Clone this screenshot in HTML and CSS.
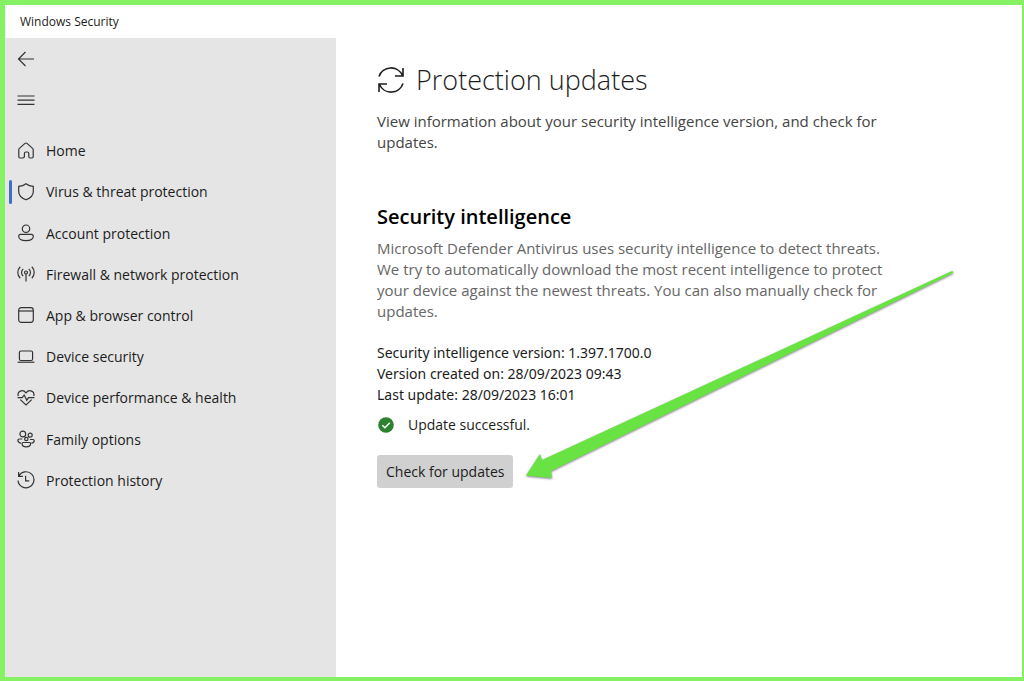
FILE: index.html
```html
<!DOCTYPE html>
<html lang="en">
<head>
<meta charset="UTF-8">
<meta name="viewport" content="width=device-width, initial-scale=1.0">
<title>Windows Security</title>
<link rel="stylesheet" href="styles.css">
</head>
<body>
<div class="window">
  <header class="titlebar">Windows Security</header>

  <div class="layout">
    <aside class="sidebar">
      <button class="icon-button" aria-label="Back">
        <svg class="icon" viewBox="0 0 18 18"><path d="M17 9H1.500M8.500 2L1.500 9l7 7"/></svg>
      </button>
      <button class="icon-button" aria-label="Menu">
        <svg class="icon" viewBox="0 0 18 18"><path d="M.5 5h17M.5 9.200h17M.5 13.400h17"/></svg>
      </button>

      <nav class="nav">
        <a class="nav-link" href="#">
          <svg class="icon" viewBox="0 0 18 18"><path d="M1.800 7.600Q1.800 6.900 2.400 6.400L8 1.400q1-.8 2 0l5.600 5q.6.5.6 1.200v7.200q0 1.200-1.200 1.200h-2q-1.200 0-1.200-1.200v-3.300q0-1.500-1.500-1.500h-1.400q-1.500 0-1.500 1.500v3.300Q6.600 16 5.400 16H3q-1.200 0-1.200-1.200z"/></svg>
          Home
        </a>
        <a class="nav-link active" href="#">
          <svg class="icon" viewBox="0 0 18 18"><path d="M9 .8Q12 3.200 16.300 3.400v5q0 5.500-7.300 8.400Q1.700 13.900 1.700 8.400v-5Q6 3.200 9 .8z"/></svg>
          Virus &amp; threat protection
        </a>
        <a class="nav-link" href="#">
          <svg class="icon" viewBox="0 0 18 18"><circle cx="9" cy="4.700" r="3.700"/><path d="M3.700 10.300h10.600q2 0 2 2 0 4.400-7.300 4.400t-7.300-4.400q0-2 2-2z"/></svg>
          Account protection
        </a>
        <a class="nav-link" href="#">
          <svg class="icon" viewBox="0 0 18 18"><circle cx="9" cy="7.500" r="1.500"/><path d="M9 9v7.500M6.200 11a4.500 4.500 0 0 1 0-7M11.800 11a4.500 4.500 0 0 0 0-7M3.200 13.200a8 8 0 0 1 0-11.400M14.800 13.200a8 8 0 0 0 0-11.400"/></svg>
          Firewall &amp; network protection
        </a>
        <a class="nav-link" href="#">
          <svg class="icon" viewBox="0 0 18 18"><rect x="1.700" y="1.700" width="14.600" height="14.600" rx="2.500"/><path d="M1.700 5h14.600"/></svg>
          App &amp; browser control
        </a>
        <a class="nav-link" href="#">
          <svg class="icon" viewBox="0 0 18 18"><rect x="2.400" y="3" width="13.200" height="9.500" rx="1.500"/><path d="M.6 14.200h16.800"/></svg>
          Device security
        </a>
        <a class="nav-link" href="#">
          <svg class="icon" viewBox="0 0 18 18"><path d="M1.300 7C-.2 2.500 5.500-.5 9 3.800 12.500-.5 18.200 2.500 16.700 7M3.300 10.600L9 16l5.700-5.400M.6 8.600h4.600l2-2.600 2.600 5.200 1.700-2.600h5.900"/></svg>
          Device performance &amp; health
        </a>
        <a class="nav-link" href="#">
          <svg class="icon" viewBox="0 0 18 18"><circle cx="5.800" cy="4" r="2.900"/><circle cx="13.200" cy="5.200" r="2"/><circle cx="9.300" cy="9" r="1.700"/><path d="M5.300 9H2.200Q.9 9 .9 10.300q0 2.400 3 3M13 9.500h3q1.200 0 1.200 1.200 0 2-2.800 2.500M6 12.500h6.600q1 0 1 1 0 3.400-4.300 3.400T5 13.500q0-1 1-1z"/></svg>
          Family options
        </a>
        <a class="nav-link" href="#">
          <svg class="icon" viewBox="0 0 18 18"><path d="M1.600 1v4.300h4.300M1.800 5.200A8 8 0 1 1 1 9.500M8.600 4.800v5h3.600"/></svg>
          Protection history
        </a>
      </nav>
    </aside>

    <main class="content">
      <h1 class="page-title">
        <svg class="title-icon" viewBox="0 0 28 28"><path d="M2 10.500A12.600 12.600 0 0 1 25.500 9.500M26 2v8h-8M26 17.500A12.600 12.600 0 0 1 2.500 18.500M2 26v-8h8"/></svg>
        Protection updates
      </h1>
      <p class="intro">View information about your security intelligence version, and check for updates.</p>

      <h2 class="section-title">Security intelligence</h2>
      <p class="description">Microsoft Defender Antivirus uses security intelligence to detect threats. We try to automatically download the most recent intelligence to protect your device against the newest threats. You can also manually check for updates.</p>

      <div class="details">
        <div>Security intelligence version: 1.397.1700.0</div>
        <div>Version created on: 28/09/2023 09:43</div>
        <div>Last update: 28/09/2023 16:01</div>
      </div>

      <div class="status">
        <svg class="status-icon" viewBox="0 0 16 16"><circle cx="8" cy="8" r="7.800"/><path d="M4.300 8.200l2.600 2.600 4.900-5"/></svg>
        Update successful.
      </div>

      <button class="update-button">Check for updates</button>
    </main>
  </div>

  <!-- arrow pointing at the update button -->
  <svg class="arrow" viewBox="0 0 430 210"><path d="M1 205.500L15 184l2 6L427 1q2 .5 1 2L26 201l1 7z"/></svg>
</div>
</body>
</html>
```
FILE: styles.css
```css
* {
  box-sizing: border-box;
}

body {
  margin: 0;
  font-family: "Open Sans", "Noto Sans", sans-serif;
  font-size: 14px;
  line-height: 21px;
  color: #1c1c1c;
  background-color: #fff;
}

.window {
  position: relative;
  display: flex;
  flex-direction: column;
  min-height: 100vh;
  border: 4px solid #85f163;
  border-width: 5px 2px 4px 5px;
}

.titlebar {
  height: 33px;
  padding: 0 15px;
  font-size: 12px;
  line-height: 33px;
}

.layout {
  flex: 1;
  display: flex;
}

.sidebar {
  flex: 0 0 331px;
  background-color: #e5e5e5;
}

.icon-button {
  display: flex;
  align-items: center;
  width: 41px;
  height: 41px;
  padding: 0 12px;
  border: none;
  background: none;
}

.icon {
  flex: none;
  width: 18px;
  height: 18px;
  fill: none;
  stroke: #333;
  stroke-width: 1.2;
}

.nav {
  display: grid;
  grid-auto-rows: 1fr;
  height: 371px;
  margin-top: 10px;
}

.nav-link {
  position: relative;
  display: flex;
  align-items: center;
  gap: 11px;
  padding: 0 12px;
  color: #1c1c1c;
  text-decoration: none;
}

.nav-link.active::before {
  content: "";
  position: absolute;
  left: 4px;
  width: 3px;
  height: 24px;
  border-radius: 2px;
  background-color: #3d6fc4;
}

.content {
  flex: 1;
  padding: 22px 40px 40px 41px;
}

.page-title {
  display: flex;
  align-items: center;
  gap: 11px;
  margin: 0;
  font-size: 27px;
  font-weight: 300;
  line-height: 40px;
}

.title-icon {
  width: 28px;
  height: 28px;
  fill: none;
  stroke: #1c1c1c;
  stroke-width: 1.6;
}

.intro,
.description {
  max-width: 515px;
  font-size: 15px;
}

.intro {
  margin: 11px 0 0;
  color: #444;
}

.section-title {
  margin: 49px 0 0;
  font-size: 20px;
  font-weight: 600;
  line-height: 30px;
  color: #000;
}

.description {
  margin: 6px 0 0;
  color: #666;
}

.details {
  margin-top: 20px;
  font-family: "Noto Sans", "Open Sans", sans-serif;
}

.status {
  display: flex;
  align-items: center;
  gap: 13px;
  margin-top: 9px;
}

.status-icon {
  width: 18px;
  height: 16px;
  fill: #2f8132;
}

.status-icon path {
  fill: none;
  stroke: #fff;
  stroke-width: 1.4;
}

.update-button {
  height: 33px;
  margin-top: 20px;
  padding: 0 9px;
  border: none;
  border-radius: 3px;
  font: inherit;
  color: #1c1c1c;
  background-color: #d0d0d0;
}

.arrow {
  position: absolute;
  top: 265px;
  left: 520px;
  width: 430px;
  height: 210px;
  fill: #69e244;
  filter: drop-shadow(0 1px 1px rgba(0, 0, 0, 0.5));
}
```
